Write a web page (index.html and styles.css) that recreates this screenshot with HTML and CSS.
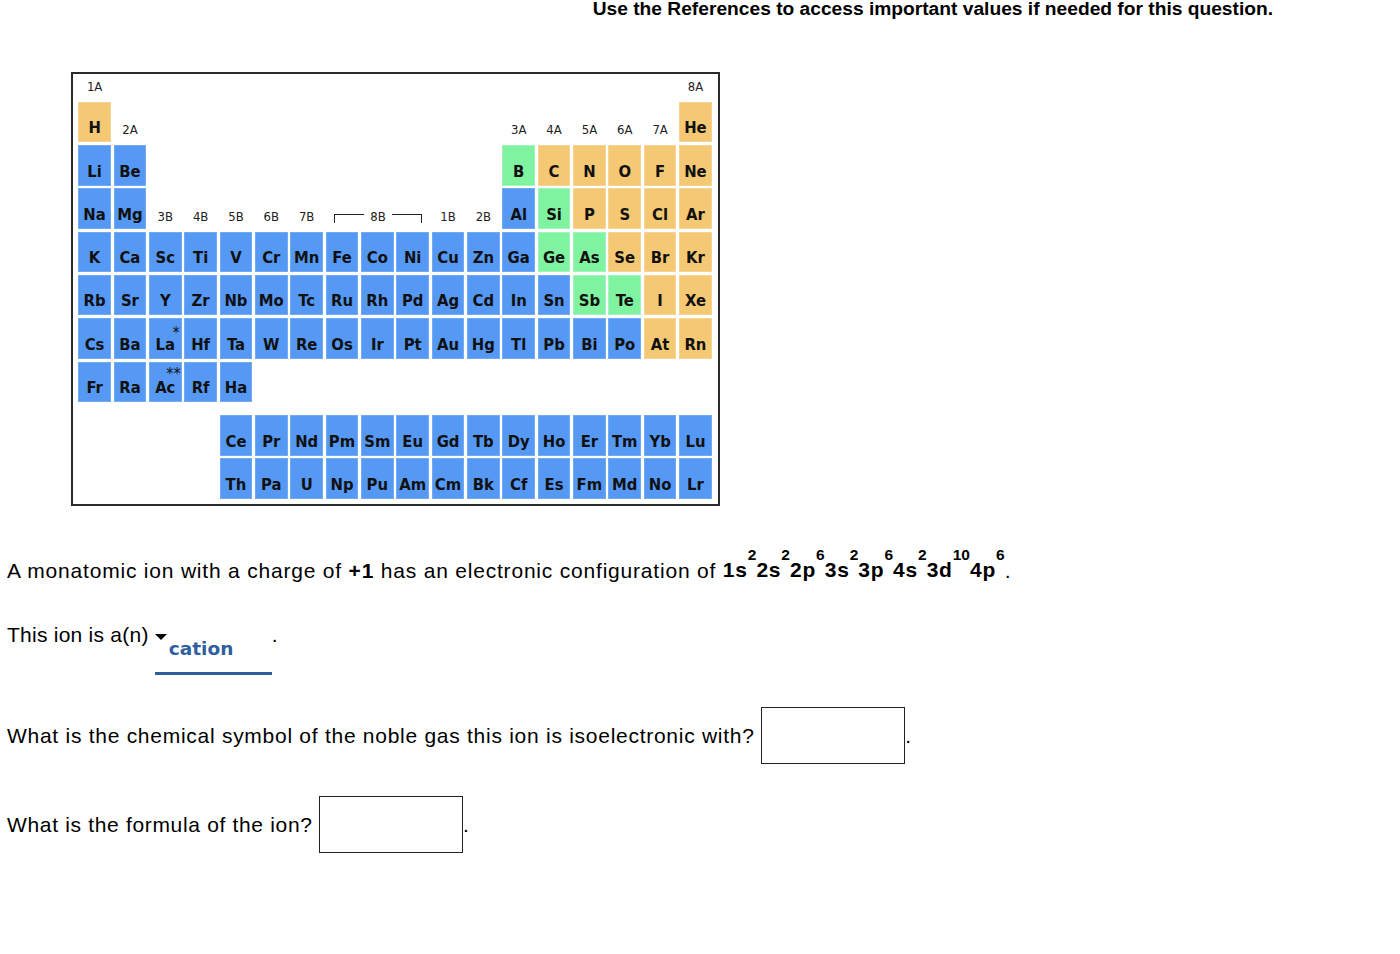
FILE: index.html
```html
<!DOCTYPE html>
<html>
<head>
<meta charset="utf-8">
<link rel="stylesheet" href="styles.css">
</head>
<body>
<div class="header">Use the References to access important values if needed for this question.</div>

<div class="ptable">
  <div class="grid main">
    <div class="lbl top">1A</div>
    <div class="lbl top c18">8A</div>

    <div class="el o">H</div>
    <div class="lbl">2A</div>
    <div class="lbl c13">3A</div>
    <div class="lbl">4A</div>
    <div class="lbl">5A</div>
    <div class="lbl">6A</div>
    <div class="lbl">7A</div>
    <div class="el o">He</div>

    <div class="el b">Li</div>
    <div class="el b">Be</div>
    <div class="el g c13">B</div>
    <div class="el o">C</div>
    <div class="el o">N</div>
    <div class="el o">O</div>
    <div class="el o">F</div>
    <div class="el o">Ne</div>

    <div class="el b">Na</div>
    <div class="el b">Mg</div>
    <div class="lbl">3B</div>
    <div class="lbl">4B</div>
    <div class="lbl">5B</div>
    <div class="lbl">6B</div>
    <div class="lbl">7B</div>
    <div class="bracket"><span class="bl"></span><span class="bt">8B</span><span class="br"></span></div>
    <div class="lbl">1B</div>
    <div class="lbl">2B</div>
    <div class="el b">Al</div>
    <div class="el g">Si</div>
    <div class="el o">P</div>
    <div class="el o">S</div>
    <div class="el o">Cl</div>
    <div class="el o">Ar</div>

    <div class="el b">K</div>
    <div class="el b">Ca</div>
    <div class="el b">Sc</div>
    <div class="el b">Ti</div>
    <div class="el b">V</div>
    <div class="el b">Cr</div>
    <div class="el b">Mn</div>
    <div class="el b">Fe</div>
    <div class="el b">Co</div>
    <div class="el b">Ni</div>
    <div class="el b">Cu</div>
    <div class="el b">Zn</div>
    <div class="el b">Ga</div>
    <div class="el g">Ge</div>
    <div class="el g">As</div>
    <div class="el o">Se</div>
    <div class="el o">Br</div>
    <div class="el o">Kr</div>

    <div class="el b">Rb</div>
    <div class="el b">Sr</div>
    <div class="el b">Y</div>
    <div class="el b">Zr</div>
    <div class="el b">Nb</div>
    <div class="el b">Mo</div>
    <div class="el b">Tc</div>
    <div class="el b">Ru</div>
    <div class="el b">Rh</div>
    <div class="el b">Pd</div>
    <div class="el b">Ag</div>
    <div class="el b">Cd</div>
    <div class="el b">In</div>
    <div class="el b">Sn</div>
    <div class="el g">Sb</div>
    <div class="el g">Te</div>
    <div class="el o">I</div>
    <div class="el o">Xe</div>

    <div class="el b">Cs</div>
    <div class="el b">Ba</div>
    <div class="el b">La<span class="star">*</span></div>
    <div class="el b">Hf</div>
    <div class="el b">Ta</div>
    <div class="el b">W</div>
    <div class="el b">Re</div>
    <div class="el b">Os</div>
    <div class="el b">Ir</div>
    <div class="el b">Pt</div>
    <div class="el b">Au</div>
    <div class="el b">Hg</div>
    <div class="el b">Tl</div>
    <div class="el b">Pb</div>
    <div class="el b">Bi</div>
    <div class="el b">Po</div>
    <div class="el o">At</div>
    <div class="el o">Rn</div>

    <div class="el b">Fr</div>
    <div class="el b">Ra</div>
    <div class="el b">Ac<span class="star two">**</span></div>
    <div class="el b">Rf</div>
    <div class="el b">Ha</div>
  </div>

  <div class="grid lan">
    <div class="el b c5">Ce</div>
    <div class="el b">Pr</div>
    <div class="el b">Nd</div>
    <div class="el b">Pm</div>
    <div class="el b">Sm</div>
    <div class="el b">Eu</div>
    <div class="el b">Gd</div>
    <div class="el b">Tb</div>
    <div class="el b">Dy</div>
    <div class="el b">Ho</div>
    <div class="el b">Er</div>
    <div class="el b">Tm</div>
    <div class="el b">Yb</div>
    <div class="el b">Lu</div>

    <div class="el b c5">Th</div>
    <div class="el b">Pa</div>
    <div class="el b">U</div>
    <div class="el b">Np</div>
    <div class="el b">Pu</div>
    <div class="el b">Am</div>
    <div class="el b">Cm</div>
    <div class="el b">Bk</div>
    <div class="el b">Cf</div>
    <div class="el b">Es</div>
    <div class="el b">Fm</div>
    <div class="el b">Md</div>
    <div class="el b">No</div>
    <div class="el b">Lr</div>
  </div>
</div>

<p class="q config">A monatomic ion with a charge of <b>+1</b> has an electronic configuration of <b>1s<sup>2</sup>2s<sup>2</sup>2p<sup>6</sup>3s<sup>2</sup>3p<sup>6</sup>4s<sup>2</sup>3d<sup>10</sup>4p<sup>6</sup></b>.</p>

<p class="q ionline">This ion is a(n) <span class="select"><span class="arrow"></span><span class="choice">cation</span></span>.</p>

<p class="q q2">What is the chemical symbol of the noble gas this ion is isoelectronic with? <span class="box"></span>.</p>

<p class="q q3">What is the formula of the ion? <span class="box"></span>.</p>
</body>
</html>
```

FILE: styles.css
```css
html, body {
  margin: 0;
  padding: 0;
  background: #fff;
}
body {
  font-family: "Liberation Sans", Arial, sans-serif;
  color: #000;
}
.header {
  font-weight: bold;
  font-size: 19.2px;
  line-height: 20px;
  margin-top: -1px;
  text-align: right;
  padding-right: 127px;
}
.ptable {
  box-sizing: border-box;
  width: 649px;
  margin: 53px 0 0 71px;
  border: 2px solid #2a2a2a;
  padding: 1px 5.75px 5px 5.3px;
}
.grid {
  display: grid;
  grid-template-columns: repeat(18, 32.6px);
  column-gap: 2.75px;
  row-gap: 2.8px;
}
.main {
  grid-template-rows: 24px repeat(7, 40.5px);
}
.lan {
  grid-template-rows: repeat(2, 40.5px);
  margin-top: 13px;
}
.c5 { grid-column: 5; }
.c13 { grid-column: 13; }
.c18 { grid-column: 18; }
.el {
  position: relative;
  box-sizing: border-box;
  display: flex;
  align-items: flex-end;
  justify-content: center;
  padding-bottom: 6px;
  font-family: "DejaVu Sans Condensed", "DejaVu Sans", sans-serif;
  font-weight: bold;
  font-size: 16.5px;
  line-height: 16px;
  color: #111;
}
.b { background: #5599f5; box-shadow: inset 0 0 0 1px #72aaf6; }
.o { background: #f5c873; box-shadow: inset 0 0 0 1px #f7d494; }
.g { background: #80f3a0; box-shadow: inset 0 0 0 1px #a0f5b8; }
.star {
  position: absolute;
  top: 8px;
  right: 2px;
  font-size: 15px;
  line-height: 15px;
  font-weight: normal;
}
.star.two {
  right: 1px;
  top: 4px;
  font-size: 16px;
  letter-spacing: 0;
}
.lbl {
  display: flex;
  align-items: flex-end;
  justify-content: center;
  padding-bottom: 6px;
  font-family: "DejaVu Sans Condensed", "DejaVu Sans", sans-serif;
  font-size: 13px;
  line-height: 12px;
  color: #222;
}
.lbl.top {
  align-items: center;
  padding-bottom: 0;
}
.bracket {
  grid-column: span 3;
  display: flex;
  align-items: flex-end;
  padding: 0 7px 6px 8.5px;
  font-family: "DejaVu Sans Condensed", "DejaVu Sans", sans-serif;
  font-size: 13px;
  line-height: 12px;
  color: #222;
}
.bl, .br {
  flex: 1;
  height: 9px;
  box-sizing: border-box;
  border-top: 1.5px solid #222;
}
.bl { border-left: 1.5px solid #222; }
.br { border-right: 1.5px solid #222; }
.bt { margin: 0 6px; }

.q {
  margin: 0;
  padding-left: 7px;
  font-size: 21px;
  letter-spacing: 0.6px;
  line-height: 26px;
}
.config {
  margin-top: 49px;
  letter-spacing: 0.8px;
}
.config sup {
  font-size: 15.5px;
  letter-spacing: 0;
  vertical-align: 17.5px;
  line-height: 0;
}
.ionline {
  margin-top: 39px;
  letter-spacing: 0.25px;
}
.select {
  display: inline-block;
  position: relative;
  box-sizing: border-box;
  width: 117px;
  height: 41px;
  vertical-align: -33px;
  border-bottom: 3px solid #2f5d98;
  letter-spacing: 0;
}
.arrow {
  position: absolute;
  left: 0;
  top: 0;
  width: 0;
  height: 0;
  border-left: 6px solid transparent;
  border-right: 6px solid transparent;
  border-top: 6px solid #000;
}
.choice {
  position: absolute;
  left: 14px;
  top: 3.6px;
  font-family: "DejaVu Sans", Verdana, sans-serif;
  font-weight: bold;
  font-size: 18.5px;
  line-height: 22px;
  color: #2f5f9e;
}
.box {
  display: inline-block;
  box-sizing: border-box;
  width: 144px;
  height: 57px;
  border: 1px solid #222;
  vertical-align: -21px;
}
.q2 {
  margin-top: 32px;
  letter-spacing: 0.73px;
}
.q3 {
  margin-top: 32px;
  letter-spacing: 0.67px;
}
```
